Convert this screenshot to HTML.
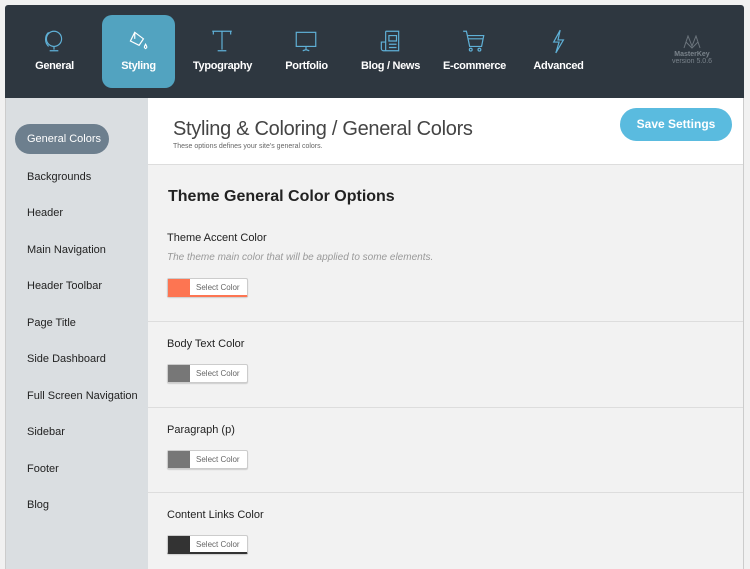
<!DOCTYPE html>
<html><head><style>
*{margin:0;padding:0;box-sizing:border-box}
body{width:750px;height:569px;background:#f1f1f1;font-family:"Liberation Sans",sans-serif;position:relative;overflow:hidden}
#top{position:absolute;left:5px;top:5px;width:739px;height:93px;background:#2e3740;border-radius:3px 3px 0 0}
.tab{position:absolute;top:10px;width:73px;height:73px;text-align:center;color:#fff;font-size:11px;font-weight:bold;letter-spacing:-0.3px}
.tab svg{position:absolute;left:23px;top:13px}
.tab span{position:absolute;left:-20px;right:-20px;top:45px}
.act{background:#52a3c0;border-radius:10px}
#side{position:absolute;left:5px;top:98px;width:143px;height:471px;background:#dadee1;border-left:1px solid #ccc}
.si{position:absolute;left:21px;font-size:11px;color:#222}
.sel{position:absolute;left:9px;top:26px;width:94px;height:30px;background:#6d7f8e;border-radius:15px;color:#fff;font-size:11px;line-height:30px;padding-left:12px}
#main{position:absolute;left:148px;top:98px;width:596px;height:471px;background:#f2f2f2;border-right:1px solid #ccc}
#hd{height:67px;background:#fff;border-bottom:1px solid #ddd;position:relative}
h1{position:absolute;left:25px;top:20px;font-size:20px;font-weight:normal;color:#444;letter-spacing:-0.3px}
.sub{position:absolute;left:25px;top:45px;font-size:7px;color:#666}
.btn{position:absolute;left:472px;top:10px;width:112px;height:33px;border-radius:17px;background:#5abbdf;color:#fff;font-size:12px;font-weight:bold;text-align:center;line-height:33px}
h2{position:absolute;left:20px;top:90px;font-size:16px;color:#222}
.lab{position:absolute;left:19px;font-size:11px;color:#222}
.desc{position:absolute;left:19px;font-size:10px;color:#999;font-style:italic}
.cp{position:absolute;left:19px;width:81px;height:19px;background:#fff;border:1px solid #ccc;border-radius:2px;box-shadow:0 1px 1px rgba(0,0,0,.15)}
.cp i{position:absolute;left:0;top:0;width:22px;height:17px}
.cp b{position:absolute;left:28px;top:4px;font-size:8px;font-weight:normal;color:#666}
.hr{position:absolute;left:0;width:595px;height:1px;background:#ddd}
</style></head><body>
<div id="top">
 <div class="tab" style="left:13px"><svg width="26" height="26" viewBox="0 0 24 24" fill="none" stroke="#5fb0d6" stroke-width="1.1"><circle cx="12" cy="10" r="7"/><path d="M7 4a9 9 0 0 0 0 13M12 17v3M8 21h8"/></svg><span>General</span></div>
 <div class="tab act" style="left:97px"><svg width="26" height="26" viewBox="0 0 24 24" fill="none" stroke="#fff" stroke-width="1.1"><path d="M9 4l8 6-4 6-8-4zM9 4v6M19 15c-1 2-2 3 0 4 2-1 1-2 0-4z"/></svg><span>Styling</span></div>
 <div class="tab" style="left:181px"><svg width="26" height="26" viewBox="0 0 24 24" fill="none" stroke="#5fb0d6" stroke-width="1.1"><path d="M3 3h18M4 3v3M20 3v3M12 3v17M8 21h8"/></svg><span>Typography</span></div>
 <div class="tab" style="left:265px"><svg width="26" height="26" viewBox="0 0 24 24" fill="none" stroke="#5fb0d6" stroke-width="1.1"><rect x="3" y="4" width="18" height="13"/><path d="M12 17v3M9 21l3-1 3 1"/></svg><span>Portfolio</span></div>
 <div class="tab" style="left:349px"><svg width="26" height="26" viewBox="0 0 24 24" fill="none" stroke="#5fb0d6" stroke-width="1.1"><path d="M8 3h12v18H6M8 3v18M4 13h4v8H6a2 2 0 0 1-2-2zM11 7h7v5h-7zM11 15h7M11 18h7"/></svg><span>Blog / News</span></div>
 <div class="tab" style="left:433px"><svg width="26" height="26" viewBox="0 0 24 24" fill="none" stroke="#5fb0d6" stroke-width="1.1"><path d="M2 3h3l3 14h11l2-10H6M6 10h14"/><circle cx="9" cy="20" r="1.3"/><circle cx="17" cy="20" r="1.3"/></svg><span>E-commerce</span></div>
 <div class="tab" style="left:517px"><svg width="26" height="26" viewBox="0 0 24 24" fill="none" stroke="#5fb0d6" stroke-width="1.1"><path d="M14 2L8 13h5l-3 10 7-12h-5z"/></svg><span>Advanced</span></div>
 <div style="position:absolute;left:662px;top:30px;width:50px;text-align:center;color:#7a838b;font-size:7px"><svg width="18" height="14" viewBox="0 0 18 14" fill="none" stroke="#6b747c"><path d="M1 13L5 1l4 10 4-10 4 12M3 7l6 6 6-6"/></svg><div style="font-weight:bold">MasterKey</div><div>version 5.0.6</div></div>
</div>
<div id="side">
 <div class="sel">General Colors</div>
 <div class="si" style="top:73px">Backgrounds</div>
 <div class="si" style="top:109px">Header</div>
 <div class="si" style="top:146px">Main Navigation</div>
 <div class="si" style="top:182px">Header Toolbar</div>
 <div class="si" style="top:219px">Page Title</div>
 <div class="si" style="top:255px">Side Dashboard</div>
 <div class="si" style="top:292px">Full Screen Navigation</div>
 <div class="si" style="top:328px">Sidebar</div>
 <div class="si" style="top:365px">Footer</div>
 <div class="si" style="top:401px">Blog</div>
</div>
<div id="main">
 <div id="hd"><h1>Styling &amp; Coloring / General Colors</h1><div class="sub">These options defines your site's general colors.</div><div class="btn">Save Settings</div></div>
 <h2>Theme General Color Options</h2>
 <div class="lab" style="top:134px">Theme Accent Color</div>
 <div class="desc" style="top:154px">The theme main color that will be applied to some elements.</div>
 <div class="cp" style="top:180px;border-bottom:2px solid #fd7552"><i style="background:#fd7552"></i><b>Select Color</b></div>
 <div class="hr" style="top:223px"></div>
 <div class="lab" style="top:240px">Body Text Color</div>
 <div class="cp" style="top:266px"><i style="background:#777"></i><b>Select Color</b></div>
 <div class="hr" style="top:309px"></div>
 <div class="lab" style="top:326px">Paragraph (p)</div>
 <div class="cp" style="top:352px"><i style="background:#777"></i><b>Select Color</b></div>
 <div class="hr" style="top:394px"></div>
 <div class="lab" style="top:411px">Content Links Color</div>
 <div class="cp" style="top:437px;border-bottom:2px solid #333"><i style="background:#333"></i><b>Select Color</b></div>
</div>
</body></html>
